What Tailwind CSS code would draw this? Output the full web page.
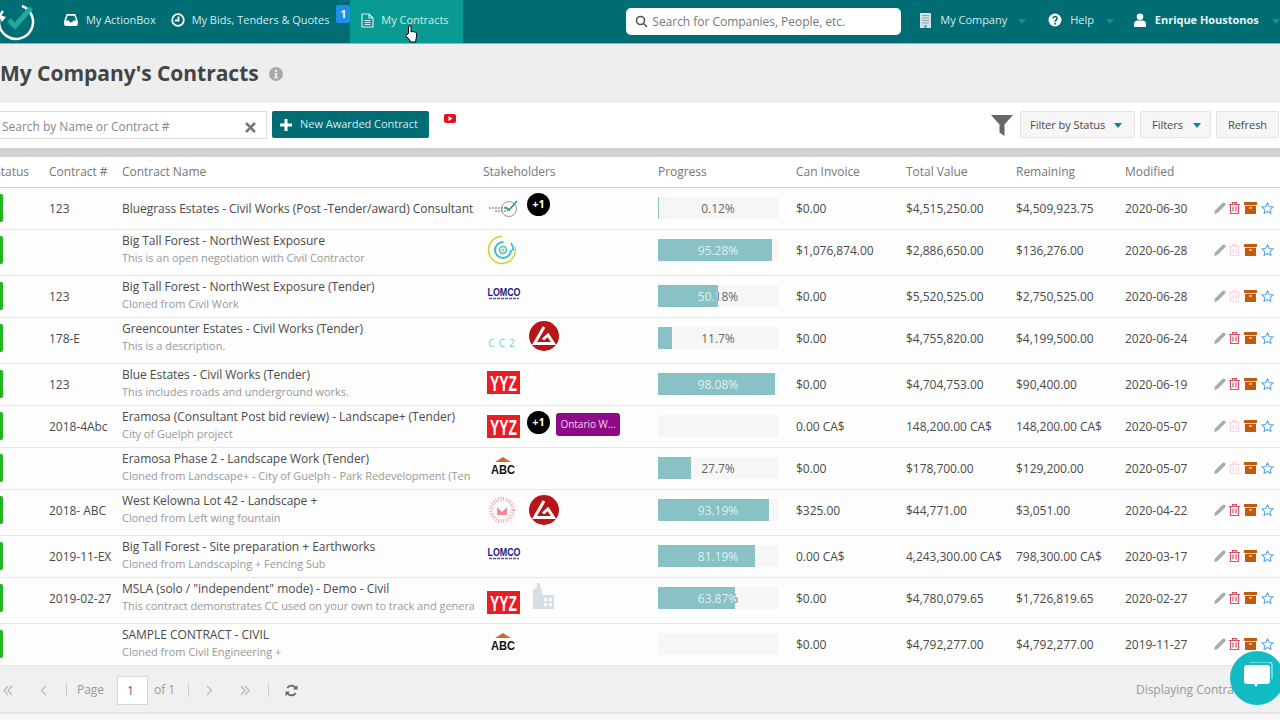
<!DOCTYPE html>
<html lang="en">
<head>
    <meta charset="UTF-8">
    <meta name="viewport" content="width=device-width, initial-scale=1.0">
    <title>My Company's Contracts</title>
    <script src="https://cdn.jsdelivr.net/npm/@tailwindcss/browser@4"></script>
</head>
<body class="relative w-[1280px] h-[720px] overflow-hidden flex flex-col bg-white text-[12px] tracking-[-0.03px] text-[#4a4a4a] [font-family:'Open_Sans',sans-serif]">

    <!-- Top nav -->
    <header class="h-[44px] shrink-0 flex items-stretch bg-[#006d75] border-b border-[#5cc9cc] text-[#d5eaeb] whitespace-nowrap">
        <div class="w-[64px] shrink-0 flex items-center">
            <svg class="-ml-[2px]" width="38" height="40" viewBox="0 0 38 40" fill="none">
                <path d="M5 9A17 17 0 1 0 24 4" stroke="#fff" stroke-width="2.5"/>
                <path d="M1 13l3 7 4-5z" fill="#fff"/>
                <path d="M11 18l6 6L33 6" stroke="#1fa99f" stroke-width="5"/>
            </svg>
        </div>
        <a class="flex items-center pb-[3px] text-[11px]">
            <svg class="mr-[8px] shrink-0" width="14" height="12" viewBox="0 0 16 14" fill="#fff"><path fill-rule="evenodd" d="M3 0h10l3 8v4a2 2 0 0 1-2 2H2a2 2 0 0 1-2-2V8zM4 2L2.200 7.500H5.500l1 2h3l1-2h3.300L12 2z"/></svg>
            My ActionBox
        </a>
        <a class="flex items-center ml-[15px] pb-[3px] text-[11px]">
            <svg class="mr-[7px] shrink-0" width="14" height="14" viewBox="0 0 14 14" fill="none" stroke="#fff" stroke-width="1.800"><circle cx="7" cy="7" r="5.800"/><path d="M7.500 3.500V7.500H4"/></svg>
            My Bids, Tenders &amp; Quotes
        </a>
        <span class="ml-[7px] mt-[5px] w-[14px] h-[18px] shrink-0 rounded-[2px] bg-[#1b8fe6] text-white text-[10px] font-bold flex items-center justify-center">1</span>
        <a class="w-[113px] shrink-0 flex items-center pl-[10px] pb-[3px] text-[11px] bg-[#0a9a94]">
            <svg class="ml-[1px] mr-[7px] shrink-0" width="13" height="15" viewBox="0 0 13 15" fill="none" stroke="#d5eaeb" stroke-width="1.200"><path d="M1 1h7l4 4v9H1zM8 1v4h4M3.500 7.500h6M3.500 9.500h6M3.500 11.500h6"/></svg>
            My Contracts
        </a>
        <div class="ml-[163px] mt-[8px] w-[275px] h-[27px] shrink-0 rounded-[5px] bg-white flex items-center pl-[9px] text-[#777]">
            <svg class="mr-[4px] shrink-0" width="13" height="13" viewBox="0 0 13 13" fill="none" stroke="#555" stroke-width="1.600"><circle cx="5.500" cy="5.500" r="4"/><path d="M8.500 8.500l3.500 3.500"/></svg>
            Search for Companies, People, etc.
        </div>
        <a class="flex items-center ml-[19px] pb-[3px] text-[11px]">
            <svg class="mr-[9px] shrink-0" width="11" height="15" viewBox="0 0 11 15"><path fill="#cfe3e4" d="M0 0h11v15H0z"/><path stroke="#7fa9ac" d="M2 2.500h7M2 5h7M2 7.500h7M2 10h7"/><path fill="#7fa9ac" d="M4 12h3v3H4z"/></svg>
            My Company
            <i class="ml-[11px] mt-[2px] border-x-[4px] border-x-transparent border-t-[5px] border-t-[#1c8d94]"></i>
        </a>
        <a class="flex items-center ml-[22px] pb-[3px] text-[11px]">
            <svg class="mr-[8px] shrink-0" width="14" height="14" viewBox="0 0 14 14"><circle cx="7" cy="7" r="6.500" fill="#fff"/><path d="M5 5.500a2 2 0 1 1 3 1.700c-.8.5-1 .8-1 1.600" fill="none" stroke="#006d75" stroke-width="1.600"/><path fill="#006d75" d="M6.100 9.800h1.800v1.800H6.100z"/></svg>
            Help
            <i class="ml-[12px] mt-[2px] border-x-[4px] border-x-transparent border-t-[5px] border-t-[#1c8d94]"></i>
        </a>
        <a class="flex items-center ml-[20px] pb-[3px] text-[11px] font-bold text-[#e8f3f4]">
            <svg class="mr-[9px] shrink-0" width="12" height="14" viewBox="0 0 12 14" fill="#fff"><circle cx="6" cy="3.800" r="3.300"/><path d="M0 14V10.500C0 8.500 2 7.500 3.500 7.500h5C10 7.500 12 8.500 12 10.500V14z"/></svg>
            Enrique Houstonos
            <i class="ml-[13px] mt-[2px] border-x-[4px] border-x-transparent border-t-[5px] border-t-[#1c8d94]"></i>
        </a>
    </header>

    <!-- Title band -->
    <div class="h-[59px] shrink-0 flex items-center bg-[#eeeeee]">
        <h1 class="text-[21px] font-bold text-[#444]">My Company's Contracts</h1>
        <svg class="ml-[10px]" width="14" height="14" viewBox="0 0 14 14"><circle cx="7" cy="7" r="7" fill="#aaa"/><path fill="#eee" d="M6 3h2v2H6zM5.500 6H8v4h1v1.200H5V10h1V7.200h-.5z"/></svg>
    </div>

    <!-- Toolbar -->
    <div class="h-[45px] shrink-0 flex items-start pt-[8px] bg-white whitespace-nowrap">
        <div class="w-[267px] h-[28px] shrink-0 flex items-center justify-between pl-[2px] pr-[10px] pt-[4px] border-y border-r border-[#dddddd] text-[#888]">
            Search by Name or Contract #
            <svg width="11" height="11" viewBox="0 0 11 11" stroke="#777" stroke-width="2.600"><path d="M1 1l9 9M10 1l-9 9"/></svg>
        </div>
        <button class="ml-[5px] w-[157px] h-[27px] shrink-0 flex items-center pl-[8px] rounded-[2px] bg-[#006d75] text-[#d5eaeb] text-[11px]">
            <svg class="mr-[8px] shrink-0" width="12" height="12" viewBox="0 0 12 12" fill="#fff"><path d="M4.500 0h3v4.500H12v3H7.500V12h-3V7.500H0v-3h4.500z"/></svg>
            New Awarded Contract
        </button>
        <svg class="ml-[15px] mt-[3px] shrink-0" width="12" height="9" viewBox="0 0 12 9"><rect width="12" height="9" rx="2" fill="#e0141e"/><path d="M4.500 2v5L8.500 4.500z" fill="#fff"/></svg>
        <svg class="ml-[535px] mt-[4px] shrink-0" width="22" height="21" viewBox="0 0 22 21" fill="#666"><path d="M0 0h22L13.500 9.500V21L8.500 17.500V9.500z"/></svg>
        <button class="ml-[7px] w-[115px] h-[27px] shrink-0 flex items-center pl-[9px] pt-[2px] rounded-[2px] border border-[#e4e4e4] bg-[#f6f6f6] text-[11px]">
            Filter by Status
            <i class="ml-[9px] border-x-[4px] border-x-transparent border-t-[5px] border-t-[#12878f]"></i>
        </button>
        <button class="ml-[5px] w-[71px] h-[27px] shrink-0 flex items-center pl-[11px] pt-[2px] rounded-[2px] border border-[#e4e4e4] bg-[#f6f6f6] text-[11px]">
            Filters
            <i class="ml-[10px] border-x-[4px] border-x-transparent border-t-[5px] border-t-[#12878f]"></i>
        </button>
        <button class="ml-[5px] w-[63px] h-[27px] shrink-0 flex items-center justify-center pt-[2px] rounded-[2px] border border-[#e4e4e4] bg-[#f6f6f6] text-[11px]">Refresh</button>
    </div>

    <div class="h-[9px] shrink-0 bg-[#d2d2d2]"></div>

    <!-- Column headers -->
    <div class="h-[31px] shrink-0 grid grid-cols-[49px_73px_361px_175px_138px_110px_110px_109px_88px_67px] items-center border-b border-[#cccccc] text-[#777]">
        <div class="flex justify-end pr-[20px]">Status</div>
        <div>Contract #</div>
        <div>Contract Name</div>
        <div>Stakeholders</div>
        <div>Progress</div>
        <div>Can Invoice</div>
        <div>Total Value</div>
        <div>Remaining</div>
        <div>Modified</div>
        <div></div>
    </div>

    <!-- Rows are filled in by the script below -->
    <div id="rows" class="shrink-0 bg-[#fdfdfd]"></div>

    <!-- Pager -->
    <footer class="h-[46px] shrink-0 flex items-center pt-[2px] bg-[#f0f0f0] text-[#999]">
        <svg class="ml-[3px]" width="10" height="11" viewBox="0 0 10 11" fill="none" stroke="#bbb" stroke-width="1.300"><path d="M5 1L1 5.500 5 10M9 1L5 5.500 9 10"/></svg>
        <svg class="ml-[27px]" width="7" height="11" viewBox="0 0 7 11" fill="none" stroke="#bbb" stroke-width="1.300"><path d="M6 1L1.500 5.500 6 10"/></svg>
        <span class="ml-[19px] h-[14px] border-l border-[#ccc]"></span>
        <span class="ml-[10px] w-[26px]">Page</span>
        <span class="ml-[14px] w-[31px] h-[29px] flex items-center justify-center pr-[4px] pt-[2px] bg-white border border-[#d8d8d8] text-[#666]">1</span>
        <span class="ml-[6px]">of 1</span>
        <span class="ml-[13px] h-[14px] border-l border-[#ccc]"></span>
        <svg class="ml-[17px]" width="7" height="11" viewBox="0 0 7 11" fill="none" stroke="#bbb" stroke-width="1.300"><path d="M1 1l4.500 4.500L1 10"/></svg>
        <svg class="ml-[27px]" width="10" height="11" viewBox="0 0 10 11" fill="none" stroke="#bbb" stroke-width="1.300"><path d="M1 1l4 4.500L1 10M5 1l4 4.500L5 10"/></svg>
        <span class="ml-[18px] h-[14px] border-l border-[#ccc]"></span>
        <svg class="ml-[16px]" width="13" height="13" viewBox="0 0 13 13" fill="none" stroke="#666" stroke-width="1.800"><path d="M11 4.500A5 5 0 0 0 2.300 4M2 8.500A5 5 0 0 0 10.700 9"/><path fill="#666" stroke="none" d="M12.500 1v4.500H8zM.5 12V7.500H5z"/></svg>
        <span class="flex-1"></span>
        <span class="w-[144px] shrink-0 overflow-hidden whitespace-nowrap">Displaying Contracts</span>
    </footer>
    <div class="flex-1 bg-[#f7f7f7] shadow-[inset_0_3px_3px_-2px_#d8d8d8]"></div>

    <!-- Chat bubble -->
    <div class="absolute left-[1230px] top-[651px] w-[54px] h-[54px] rounded-full bg-[#12bcc4] flex items-center justify-center">
        <svg class="ml-[2px] -mt-[4px]" width="30" height="28" viewBox="0 0 30 28"><path d="M7 0h19a3 3 0 0 1 3 3v14" fill="none" stroke="#8fe3e6" stroke-width="1.500"/><path fill="#fff" d="M4 3h20a3 3 0 0 1 3 3v13a3 3 0 0 1-3 3H15l-2 3-2-3H4a3 3 0 0 1-3-3V6a3 3 0 0 1 3-3z"/></svg>
    </div>

    <!-- Mouse pointer -->
    <svg class="absolute left-[405px] top-[25px]" width="14" height="18" viewBox="0 0 14 18"><path fill="#fff" stroke="#000" stroke-width="1" stroke-linejoin="round" d="M3.500 8V2a1.300 1.300 0 0 1 2.600 0v5l.9-.5c.7-.3 1.200 0 1.400.5.600-.5 1.400-.3 1.600.4.700-.3 1.500 0 1.600.8.200 2-.1 5-.8 6.800V17H5v-1.500L1 11c-.8-1.100.4-2.400 1.500-1.500z"/></svg>

    <script>
        const yyz = `<svg width="33" height="23" viewBox="0 0 33 23"><rect width="33" height="23" fill="#ea1c24"/><text x="16.500" y="20" text-anchor="middle" font-family="Liberation Sans" font-weight="700" font-size="22" fill="#fff" textLength="27" lengthAdjust="spacingAndGlyphs">YYZ</text></svg>`;
        const lomco = `<svg width="34" height="14" viewBox="0 0 34 14"><text x="0.500" y="8.500" font-family="Liberation Sans" font-weight="700" font-size="10" fill="#1e1a84" textLength="33" lengthAdjust="spacingAndGlyphs">LOMCO</text><path d="M2 11.500h30" stroke="#5a58a8" stroke-dasharray="3 1" stroke-width="1.400"/></svg>`;
        const abc = `<svg class="-ml-[1px]" width="33" height="22" viewBox="0 0 33 22"><path d="M9 7l8-5 8 5z" fill="#e2602a"/><text x="17" y="19" text-anchor="middle" font-family="Liberation Sans" font-weight="700" font-size="13" fill="#111" textLength="24" lengthAdjust="spacingAndGlyphs">ABC</text></svg>`;
        const gamma = `<svg class="ml-[1px]" width="30" height="30" viewBox="0 0 30 30"><circle cx="15" cy="15" r="15" fill="#b81519"/><path d="M15 6L5.500 22.500h19L19 14l-5 4.500" fill="none" stroke="#fff" stroke-width="3"/></svg>`;
        const ring = `<svg width="30" height="30" viewBox="0 0 30 30" fill="none"><path d="M15 1.500A13.500 13.500 0 0 0 15 28.500A13.500 13.500 0 0 0 28 12" stroke="#c5d62e" stroke-width="1.500"/><path d="M24 8A11 11 0 0 1 26 16" stroke="#3bbfc4" stroke-width="1.500"/><circle cx="16" cy="15" r="8" stroke="#3bbfc4" stroke-width="2" stroke-dasharray="38 12"/><circle cx="16" cy="15" r="3.500" stroke="#3bbfc4" stroke-width="1.500"/><circle cx="16" cy="15" r="1.500" fill="#c5d62e"/></svg>`;
        const own = `<svg width="33" height="22" viewBox="0 0 33 22" fill="none"><circle cx="22" cy="12" r="7.500" stroke="#999"/><path d="M18 10l4 3 8-9" stroke="#2c9a92" stroke-width="1.800"/><path d="M2 11h17M8 14h13" stroke="#666" stroke-dasharray="2 1"/></svg>`;
        const cc2 = `<div class="w-[33px] mt-[10px] text-center text-[10px] tracking-[4px] text-[#6fd1d1] whitespace-nowrap">CC2</div>`;
        const rosette = `<svg width="30" height="30" viewBox="0 0 30 30" fill="none"><circle cx="15" cy="15" r="11" stroke="#f3a9ae" stroke-width="4" stroke-dasharray="1 1.500"/><path d="M10 20v-8l5 5 5-5v8z" fill="#ef8a90"/></svg>`;
        const bldg = `<svg class="ml-[3px] -mt-[6px]" width="24" height="27" viewBox="0 0 24 27" fill="#d5dfe4"><path d="M2 8l4-3V1h3v4l2 3v19H2z"/><path fill-rule="evenodd" d="M11 13h12v14H11zM13 16v3h3v-3zM18 16v3h3v-3zM13 21v3h3v-3zM18 21v3h3v-3z"/></svg>`;
        const plusOne = `<span class="-mt-[8px] -ml-[1px] w-[23px] h-[23px] rounded-full bg-black text-white text-[11px] font-bold flex items-center justify-center">+1</span>`;
        const ontario = `<span class="-mt-[4px] -ml-[2px] w-[64px] h-[23px] rounded-[3px] bg-[#8e0a86] text-[#f0d5ee] text-[10px] flex items-center justify-center whitespace-nowrap">Ontario W...</span>`;

        const rows = [
            { h: "h-[42px]", num: "123", name: "Bluegrass Estates - Civil Works (Post -Tender/award) Consultant", logos: `<div class="w-[33px]">${own}</div>${plusOne}`, pct: 0.12, bar: 1, inv: "$0.00", total: "$4,515,250.00", left: "$4,509,923.75", date: "2020-06-30", del: true },
            { h: "h-[46px]", num: "", name: "Big Tall Forest - NorthWest Exposure", sub: "This is an open negotiation with Civil Contractor", logos: `<div class="w-[33px]">${ring}</div>`, pct: 95.28, bar: 114, inv: "$1,076,874.00", total: "$2,886,650.00", left: "$136,276.00", date: "2020-06-28" },
            { h: "h-[42px]", num: "123", name: "Big Tall Forest - NorthWest Exposure (Tender)", sub: "Cloned from Civil Work", logos: `<div class="w-[33px] -mt-[4px]">${lomco}</div>`, pct: 50.18, bar: 60, inv: "$0.00", total: "$5,520,525.00", left: "$2,750,525.00", date: "2020-06-28" },
            { h: "h-[46px]", num: "178-E", name: "Greencounter Estates - Civil Works (Tender)", sub: "This is a description.", logos: `${cc2}<div class="-mt-[4px]">${gamma}</div>`, pct: 11.7, bar: 14, inv: "$0.00", total: "$4,755,820.00", left: "$4,199,500.00", date: "2020-06-24", del: true },
            { h: "h-[42px]", num: "123", name: "Blue Estates - Civil Works (Tender)", sub: "This includes roads and underground works.", logos: `<div class="-mt-[4px]">${yyz}</div>`, pct: 98.08, bar: 117, inv: "$0.00", total: "$4,704,753.00", left: "$90,400.00", date: "2020-06-19", del: true },
            { h: "h-[42px]", num: "2018-4Abc", name: "Eramosa (Consultant Post bid review) - Landscape+ (Tender)", sub: "City of Guelph project", logos: `<div>${yyz}</div>${plusOne}${ontario}`, pct: 0, bar: 0, blank: true, inv: "0.00 CA$", total: "148,200.00 CA$", left: "148,200.00 CA$", date: "2020-05-07" },
            { h: "h-[42px]", num: "", name: "Eramosa Phase 2 - Landscape Work (Tender)", sub: "Cloned from Landscape+ - City of Guelph - Park Redevelopment (Ten", logos: `<div class="-mt-[4px]">${abc}</div>`, pct: 27.7, bar: 33, inv: "$0.00", total: "$178,700.00", left: "$129,200.00", date: "2020-05-07" },
            { h: "h-[46px]", num: "2018- ABC", name: "West Kelowna Lot 42 - Landscape +", sub: "Cloned from Left wing fountain", logos: `<div class="w-[33px]">${rosette}</div><div>${gamma}</div>`, pct: 93.19, bar: 111, inv: "$325.00", total: "$44,771.00", left: "$3,051.00", date: "2020-04-22", del: true },
            { h: "h-[42px]", num: "2019-11-EX", name: "Big Tall Forest - Site preparation + Earthworks", sub: "Cloned from Landscaping + Fencing Sub", logos: `<div class="w-[33px] -mt-[4px]">${lomco}</div>`, pct: 81.19, bar: 97, inv: "0.00 CA$", total: "4,243,300.00 CA$", left: "798,300.00 CA$", date: "2020-03-17", del: true },
            { h: "h-[46px]", num: "2019-02-27", name: 'MSLA (solo / "independent" mode) - Demo - Civil', sub: "This contract demonstrates CC used on your own to track and genera", logos: `<div class="mt-[8px]">${yyz}</div>${bldg}`, pct: 63.87, bar: 77, inv: "$0.00", total: "$4,780,079.65", left: "$1,726,819.65", date: "2020-02-27", del: true },
            { h: "h-[42px]", num: "", name: "SAMPLE CONTRACT - CIVIL", sub: "Cloned from Civil Engineering +", logos: `<div class="-mt-[4px]">${abc}</div>`, pct: 0, bar: 0, blank: true, inv: "$0.00", total: "$4,792,277.00", left: "$4,792,277.00", date: "2019-11-27", del: true }
        ];

        const cell = "h-[40px] flex items-center whitespace-nowrap";
        const textCell = "h-[40px] pt-[2px] flex items-center whitespace-nowrap";

        document.getElementById("rows").innerHTML = rows.map(r => `
            <div class="${r.h} grid grid-cols-[49px_73px_361px_175px_138px_110px_110px_109px_88px_67px] border-b border-[#e6e8ea]">
                <div class="${cell}"><span class="w-[3px] h-[28px] rounded-r-[2px] bg-[#22b522]"></span></div>
                <div class="${textCell}">${r.num}</div>
                <div class="h-[40px] w-[352px] overflow-hidden flex flex-col justify-center whitespace-nowrap leading-[17px] ${r.sub ? "pb-[2px]" : ""}">
                    <span>${r.name}</span>
                    ${r.sub ? `<span class="text-[11px] text-[#999]">${r.sub}</span>` : ""}
                </div>
                <div class="${cell} pl-[4px] gap-[8px]">${r.logos}</div>
                <div class="${cell}">
                    <div class="relative w-[120px] h-[22px] bg-[#f6f6f6] text-[#666]">
                        <div class="absolute inset-0 pt-[2px] flex items-center justify-center">${r.blank ? "" : r.pct + "%"}</div>
                        <div class="absolute inset-y-0 left-0 overflow-hidden bg-[#88c2c4] text-[#dff1f1]" style="width:${r.bar}px">
                            <div class="w-[120px] h-[22px] pt-[2px] flex items-center justify-center">${r.blank ? "" : r.pct + "%"}</div>
                        </div>
                    </div>
                </div>
                <div class="${textCell}">${r.inv}</div>
                <div class="${textCell}">${r.total}</div>
                <div class="${textCell}">${r.left}</div>
                <div class="${textCell}">${r.date}</div>
                <div class="${cell} gap-[3px] pl-[1px]">
                    <svg width="12" height="12" viewBox="0 0 12 12" fill="#aaa"><path d="M0 12l1-3.500L8.500 1a1.500 1.500 0 0 1 2.500 2.500L3.500 11z"/></svg>
                    <svg class="${r.del ? "" : "opacity-20"}" width="11" height="12" viewBox="0 0 11 12" fill="none" stroke="#d9506a" stroke-width="1.200"><path d="M0 2.500h11M3.500 2.500V.7h4v1.800M1.500 2.500v9h8v-9M4 4.500v5M7 4.500v5"/></svg>
                    <svg class="ml-[1px]" width="13" height="12" viewBox="0 0 13 12" fill="#bf5a0f"><path d="M0 0h13v3H0z"/><path fill-rule="evenodd" d="M1 3.800h11V12H1zM5 5.500v1h3v-1z"/></svg>
                    <svg class="ml-[1px]" width="13" height="12" viewBox="0 0 13 12" fill="none" stroke="#5aa9e6" stroke-width="1.100"><path d="M6.500 1l1.700 3.500 3.800.5-2.800 2.600.7 3.800-3.400-1.900-3.400 1.900.7-3.800L1 5l3.800-.5z"/></svg>
                </div>
            </div>`).join("");
    </script>
</body>
</html>
